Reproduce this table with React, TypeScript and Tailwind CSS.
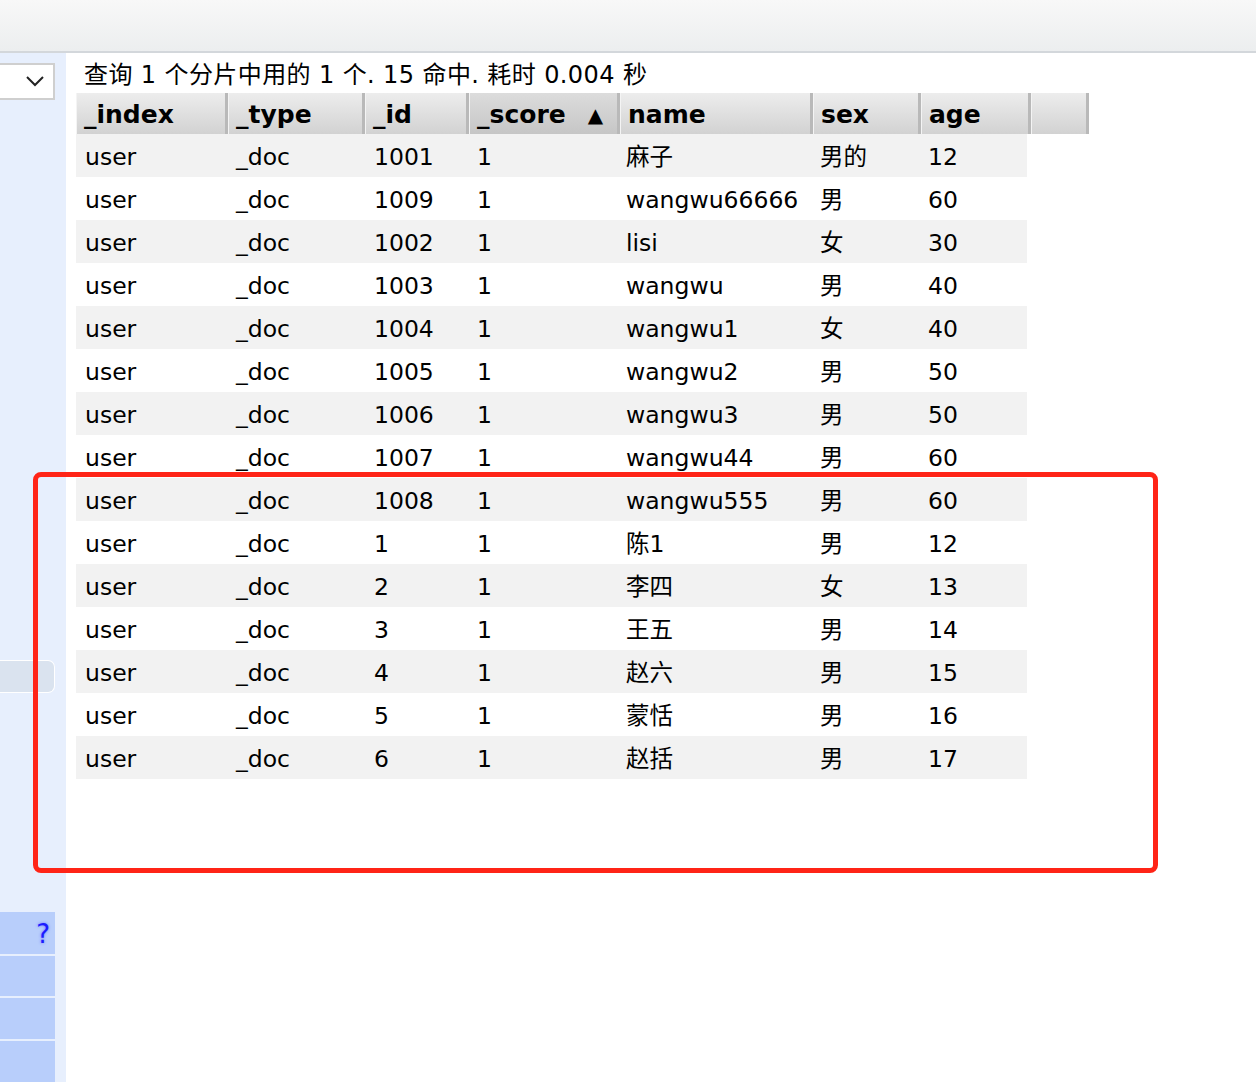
import React from "react";

const FONT = '"DejaVu Sans", "Noto Sans CJK SC", sans-serif';

const rows: string[][] = [
  ["user", "_doc", "1001", "1", "麻子", "男的", "12"],
  ["user", "_doc", "1009", "1", "wangwu66666", "男", "60"],
  ["user", "_doc", "1002", "1", "lisi", "女", "30"],
  ["user", "_doc", "1003", "1", "wangwu", "男", "40"],
  ["user", "_doc", "1004", "1", "wangwu1", "女", "40"],
  ["user", "_doc", "1005", "1", "wangwu2", "男", "50"],
  ["user", "_doc", "1006", "1", "wangwu3", "男", "50"],
  ["user", "_doc", "1007", "1", "wangwu44", "男", "60"],
  ["user", "_doc", "1008", "1", "wangwu555", "男", "60"],
  ["user", "_doc", "1", "1", "陈1", "男", "12"],
  ["user", "_doc", "2", "1", "李四", "女", "13"],
  ["user", "_doc", "3", "1", "王五", "男", "14"],
  ["user", "_doc", "4", "1", "赵六", "男", "15"],
  ["user", "_doc", "5", "1", "蒙恬", "男", "16"],
  ["user", "_doc", "6", "1", "赵括", "男", "17"],
];

const widths = ["w-[152px]", "w-[137px]", "w-[104px]", "w-[151px]", "w-[193px]", "w-[108px]", "w-[106px]"];
const pads = ["pl-[9px]", "pl-[8px]", "pl-[9px]", "pl-[8px]", "pl-[6px]", "pl-[7px]", "pl-[7px]"];

function HeaderCell({ w, label, sorted }: { w: string; label?: string; sorted?: boolean }) {
  return (
    <div
      className={`${w} h-full flex items-center pl-[7px] pt-[2px] border-r-[3px] border-r-[#b9b9b9] border-l border-l-[#f4f4f4] ${
        sorted ? "bg-gradient-to-b from-[#dcdcdc] to-[#c6c6c6]" : "bg-gradient-to-b from-[#ededed] to-[#d2d2d2]"
      } font-bold text-[25px] text-black`}
    >
      {label}
      {sorted && <span className="ml-[22px] text-[20px]">▲</span>}
    </div>
  );
}

export default function App() {
  return (
    <div className="relative w-[1256px] h-[1082px] overflow-hidden bg-white" style={{ fontFamily: FONT }}>
      <div className="h-[53px] bg-gradient-to-b from-[#f8f8f8] to-[#eceeef] border-b-2 border-[#d3d7db]" />
      <div className="flex h-[1029px]">
        {/* sidebar */}
        <div className="w-[66px] bg-[#e7effd] flex flex-col">
          <div className="mt-[10px] w-[55px] h-[37px] bg-white border-2 border-[#cfcfcf] border-l-0 flex items-center justify-end pr-[8px]">
            <svg width="20" height="12" viewBox="0 0 20 12" fill="none">
              <path d="M2 2 L10 10 L18 2" stroke="#222" strokeWidth="2" />
            </svg>
          </div>
          <div className="mt-[560px] w-[55px] h-[34px] bg-[#dae3ef] border border-l-0 border-white rounded-r-[7px]" />
          <div className="mt-[219px] flex flex-col gap-[2px]">
            <div className="w-[55px] h-[42px] bg-[#b8cefb] flex items-center justify-end pr-[5px] pt-[3px]">
              <span className="text-[26px] text-[#1c1cff]" style={{ textShadow: "0 0 3px rgba(60,60,255,0.6)" }}>?</span>
            </div>
            <div className="w-[55px] h-[40px] bg-[#b8cefb]" />
            <div className="w-[55px] h-[41px] bg-[#b8cefb]" />
            <div className="w-[55px] h-[41px] bg-[#b8cefb]" />
          </div>
        </div>
        {/* main */}
        <div className="flex-1 pl-[10px] text-[23.5px] text-black">
          <div className="h-[40px] flex items-center pl-[8px] pt-[4px] text-[24px] tracking-[0.4px]">查询 1 个分片中用的 1 个. 15 命中. 耗时 0.004 秒</div>
          <div className="flex h-[41px]">
            <HeaderCell w="w-[152px]" label="_index" />
            <HeaderCell w="w-[137px]" label="_type" />
            <HeaderCell w="w-[104px]" label="_id" />
            <HeaderCell w="w-[151px]" label="_score" sorted />
            <HeaderCell w="w-[193px]" label="name" />
            <HeaderCell w="w-[108px]" label="sex" />
            <HeaderCell w="w-[110px]" label="age" />
            <HeaderCell w="w-[58px]" />
          </div>
          {rows.map((r, i) => (
            <div key={i} className={`flex h-[43px] w-[951px] pt-[5px] ${i % 2 === 0 ? "bg-[#f2f2f2]" : "bg-white"}`}>
              {r.map((c, j) => (
                <div key={j} className={`${widths[j]} ${pads[j]} flex items-center`}>
                  {c}
                </div>
              ))}
            </div>
          ))}
        </div>
      </div>
      {/* red annotation */}
      <div className="absolute left-[33px] top-[472px] w-[1125px] h-[401px] border-[5px] border-[#ff2417] rounded-[8px]" />
    </div>
  );
}
